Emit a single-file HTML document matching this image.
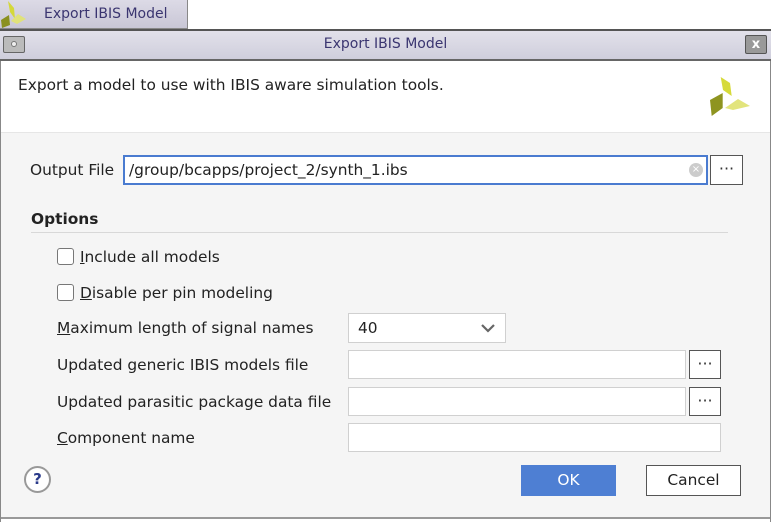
<!DOCTYPE html>
<html><head><style>
*{box-sizing:border-box;margin:0;padding:0}
body{width:771px;height:522px;overflow:hidden;background:#fff;font-family:"DejaVu Sans","Liberation Sans",sans-serif;font-size:15.4px;color:#222;position:relative}
.a{position:absolute}
.in{position:absolute;background:#fff;border:1px solid #d0d0d0}
.btn3{position:absolute;width:33px;height:30px;border:1px solid #555;background:#fff;font-size:16px;text-align:center;line-height:26px;color:#333}
.lbl{position:absolute;font-size:15.4px;color:#222}
.cb{position:absolute;width:17px;height:17px;border:1px solid #777;border-radius:3px;background:#fff}
u{text-decoration:underline}
</style></head><body>
<div class="a" style="left:0;top:0;width:188px;height:29px;background:linear-gradient(#dcdae6,#c9c7d6);border:1px solid #888;border-top:none;border-left:none"></div>
<svg class="a" style="left:0;top:0" width="30" height="28"><polygon points="8,1 14,8 15,19 10,12" fill="#d4d83a"/><polygon points="1,20 9,15 10,25 2,28" fill="#8a9020"/><polygon points="11,21 18,14 26,19 17,24" fill="#e0e27a"/></svg>
<div class="a" style="left:44px;top:6px;font-size:14px;color:#3a3570">Export IBIS Model</div>
<div class="a" style="left:0;top:29px;width:771px;height:32px;background:linear-gradient(#e2e1ea,#cfcedc);border-top:2px solid #555;border-bottom:2px solid #666"></div>
<div class="a" style="left:3px;top:36px;width:22px;height:17px;background:#bbb;border:1px solid #666;border-radius:2px"></div>
<div class="a" style="left:11px;top:41px;width:6px;height:6px;border-radius:50%;background:#eee;border:1px solid #777"></div>
<div class="a" style="left:0;top:36px;width:771px;text-align:center;font-size:14px;color:#3a3570">Export IBIS Model</div>
<div class="a" style="left:745px;top:35px;width:22px;height:19px;background:#999;border:1px solid #555;border-radius:2px;color:#fff;font-weight:bold;font-size:13px;text-align:center;line-height:17px">x</div>
<div class="a" style="left:0;top:61px;width:771px;height:461px;border-left:1px solid #888;border-right:1px solid #888"></div>
<div class="a" style="left:18px;top:76px">Export a model to use with IBIS aware simulation tools.</div>
<svg class="a" style="left:700px;top:70px" width="60" height="55"><polygon points="20.7,7 30,13 31.7,26 23,20" fill="#d6da3a"/><polygon points="10,30 22.7,23 22.7,38 11.7,46" fill="#8e9420"/><polygon points="25,38 38,29 50,36 33,40" fill="#e2e47c"/></svg>
<div class="a" style="left:1px;top:132px;width:769px;height:387px;background:#f5f5f5;border-top:1px solid #e6e6e6;border-bottom:2px solid #999"></div>
<div class="lbl" style="left:30px;top:161px">Output File</div>
<div class="in" style="left:123px;top:155px;width:585px;height:30px;border:2px solid #4a7bd0"></div>
<div class="lbl" style="left:129px;top:161px">/group/bcapps/project_2/synth_1.ibs</div>
<div class="a" style="left:689px;top:163px;width:14px;height:14px;border-radius:50%;background:#ccc;color:#fff;font-size:10px;text-align:center;line-height:14px">×</div>
<div class="btn3" style="left:710px;top:155px">···</div>
<div class="a" style="left:31px;top:210px;font-weight:bold">Options</div>
<div class="a" style="left:31px;top:232px;width:697px;height:1px;background:#d8d8d8"></div>
<div class="cb" style="left:57px;top:248px"></div><div class="lbl" style="left:80px;top:248px"><u>I</u>nclude all models</div>
<div class="cb" style="left:57px;top:284px"></div><div class="lbl" style="left:80px;top:284px"><u>D</u>isable per pin modeling</div>
<div class="lbl" style="left:57px;top:319px"><u>M</u>aximum length of signal names</div>
<div class="in" style="left:348px;top:313px;width:158px;height:30px"></div>
<div class="lbl" style="left:358px;top:319px">40</div>
<svg class="a" style="left:480px;top:322px" width="16" height="12"><path d="M2 3 L8 9 L14 3" stroke="#666" stroke-width="2.2" fill="none"/></svg>
<div class="lbl" style="left:57px;top:356px">Updated generic IBIS models file</div>
<div class="in" style="left:348px;top:350px;width:338px;height:29px"></div>
<div class="btn3" style="left:689px;top:350px;width:32px;height:29px;line-height:25px">···</div>
<div class="lbl" style="left:57px;top:393px">Updated parasitic package data file</div>
<div class="in" style="left:348px;top:387px;width:338px;height:29px"></div>
<div class="btn3" style="left:689px;top:387px;width:32px;height:29px;line-height:25px">···</div>
<div class="lbl" style="left:57px;top:429px"><u>C</u>omponent name</div>
<div class="in" style="left:348px;top:423px;width:373px;height:29px"></div>
<div class="a" style="left:24px;top:466px;width:27px;height:27px;border-radius:50%;border:2px solid #999;background:#fff;color:#2a3a8a;font-weight:bold;font-size:15px;text-align:center;line-height:23px">?</div>
<div class="a" style="left:521px;top:465px;width:95px;height:31px;background:#4e7fd3;color:#fff;text-align:center;line-height:31px">OK</div>
<div class="a" style="left:646px;top:465px;width:95px;height:31px;background:#fff;border:1px solid #555;text-align:center;line-height:29px">Cancel</div>
</body></html>
